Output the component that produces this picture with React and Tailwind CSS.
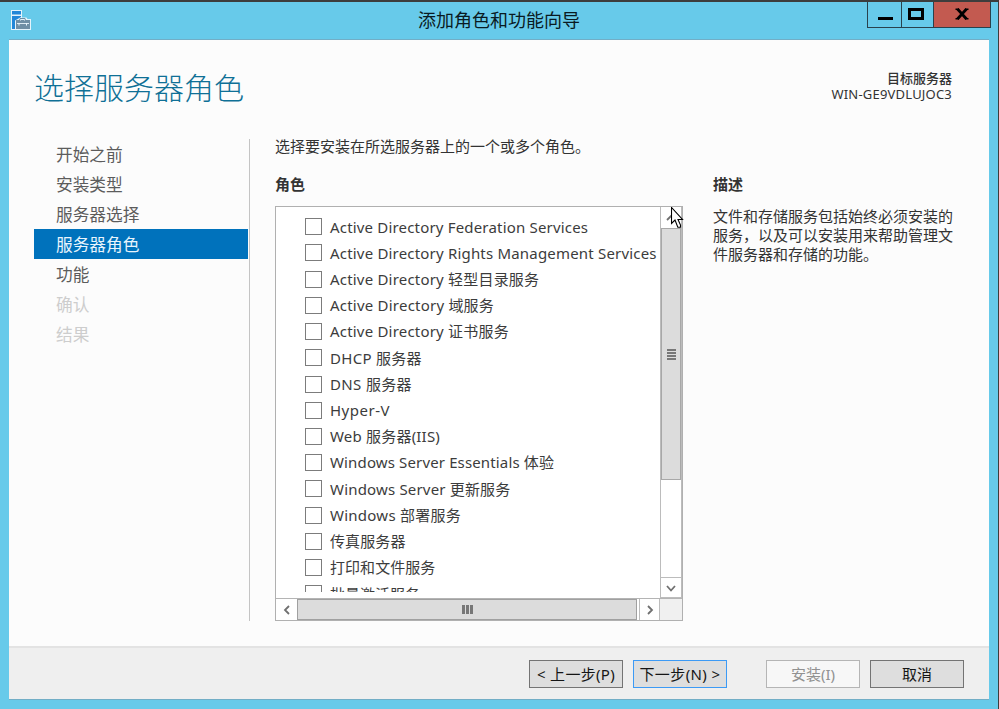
import React from 'react';

const ROLES = [
  ['Active Directory Federation Services', 'tracking-[0.18px]'],
  ['Active Directory Rights Management Services', 'tracking-[0.19px]'],
  ['Active Directory 轻型目录服务', 'tracking-[0.2px]'],
  ['Active Directory 域服务', 'tracking-[0.22px]'],
  ['Active Directory 证书服务', 'tracking-[0.2px]'],
  ['DHCP 服务器', 'tracking-[0.3px]'],
  ['DNS 服务器', 'tracking-[0.35px]'],
  ['Hyper-V', 'tracking-[0.5px]'],
  ['Web 服务器(IIS)', 'tracking-[0.2px]'],
  ['Windows Server Essentials 体验', 'tracking-[0.14px]'],
  ['Windows Server 更新服务', 'tracking-[0.18px]'],
  ['Windows 部署服务', 'tracking-[0.25px]'],
  ['传真服务器', 'tracking-[0.1px]'],
  ['打印和文件服务', 'tracking-[0.05px]'],
  ['批量激活服务', 'tracking-[0.01px]'],
];

const STEPS = [
  ['开始之前', 'text-[#5c5c5c]'],
  ['安装类型', 'text-[#5c5c5c]'],
  ['服务器选择', 'text-[#5c5c5c]'],
  ['服务器角色', 'bg-[#0072bc] text-[#e8f4fc]'],
  ['功能', 'text-[#5c5c5c]'],
  ['确认', 'text-[#cdcdcd]'],
  ['结果', 'text-[#cdcdcd]'],
];

function Chevron({ d }) {
  return (
    <svg width="10" height="10" viewBox="0 0 10 10" fill="none" stroke="#707070" strokeWidth="1.8">
      <path d={d} />
    </svg>
  );
}

function TitleBar() {
  return (
    <header className="relative flex h-[37px] shrink-0 justify-between">
      <svg className="ml-[11px] mt-[8px]" width="20" height="20" viewBox="0 0 20 20">
        <path d="M0 0H11V7.500H15.500L16.500 9H20V20H0Z" fill="#e4f3fb" />
        <path d="M1 1H10V4.500H1ZM1 6H10V7L7.500 8.500L4 10.500V19H1Z" fill="#2287d8" />
        <path d="M5 10H8L9 8H14L15 10H19V19H5Z" fill="#6f8fa5" />
        <path d="M9.500 10.500V9.500H13.500V10.500" fill="none" stroke="#e4f3fb" />
        <path d="M6 13.500H18" fill="none" stroke="#dceaf2" />
        <path d="M8 13V15.500M15.500 13V15.500" fill="none" stroke="#e4f3fb" />
      </svg>
      <h1 className="absolute left-[418px] top-[6px] whitespace-nowrap text-[18px] leading-[24px] text-[#0a1a22]">添加角色和功能向导</h1>
      <div className="mr-[7px] flex h-[26px] border-x border-b border-[#29424d]">
        <div className="flex w-[34px] justify-center border-r border-[#29424d] pl-px pt-[15px]">
          <span className="h-[3px] w-[15px] bg-black" />
        </div>
        <div className="flex w-[32px] justify-center border-r border-[#29424d] pr-[3px] pt-[6px]">
          <span className="h-[12px] w-[16px] border-[3px] border-black" />
        </div>
        <div className="flex w-[56px] justify-center bg-[#c35a50] pr-[1px] pt-[6px]">
          <svg width="14" height="12" viewBox="0 0 14 12" fill="none" stroke="#000" strokeWidth="2.800">
            <path d="M0.500 1.200H4M10 1.200H13.500M0.500 10.800H4M10 10.800H13.500" strokeWidth="1.600" />
            <path d="M2.500 1L11.500 11M11.500 1L2.500 11" />
          </svg>
        </div>
      </div>
    </header>
  );
}

function RoleList() {
  return (
    <div className="relative flex h-[415px] w-[408px] flex-col border border-[#b0b0b0] bg-white">
      <div className="flex h-[391px]">
        <div className="h-[385px] w-[384px] overflow-hidden pl-[29px] pt-[6.6px]">
          {ROLES.map(([name, tracking]) => (
            <div key={name} className="flex h-[26.23px] items-center">
              <span className="mr-[8px] h-[17px] w-[17px] shrink-0 border border-[#7c7c7c] bg-white" />
              <span className={'whitespace-nowrap pb-[0.4px] text-[15px] leading-[24px] text-[#3c3c3c] ' + tracking}>{name}</span>
            </div>
          ))}
        </div>
        <div className="flex w-[22px] flex-col border-l border-r border-[#bcbcbc]">
          <div className="flex h-[21px] items-center justify-center"><Chevron d="M1 7L5 3L9 7" /></div>
          <div className="flex h-[252px] flex-col items-center justify-center gap-px border border-[#a8a8a8] bg-[#dcdcdc] pt-[1px]">
            {[0, 1, 2, 3].map((i) => <span key={i} className="h-[2px] w-[9px] bg-[#777]" />)}
          </div>
          <div className="flex-1" />
          <div className="flex h-[21px] items-center justify-center border-y border-[#bcbcbc]"><Chevron d="M1 3L5 7.500L9 3" /></div>
        </div>
      </div>
      <div className="flex flex-1 border-t border-[#b4b4b4]">
        <div className="flex w-[21px] items-center justify-center"><Chevron d="M7 1L3 5L7 9" /></div>
        <div className="flex w-[340px] items-center justify-center gap-px border border-[#a0a0a0] bg-[#dcdcdc]">
          {[0, 1, 2].map((i) => <span key={i} className="h-[9px] w-[3px] bg-[#777]" />)}
        </div>
        <div className="ml-[2px] flex w-[21px] items-center justify-center border-x border-[#bcbcbc]"><Chevron d="M3 1L7 5L3 9" /></div>
        <div className="flex-1 bg-[#f0f0f0]" />
      </div>
      <svg className="absolute left-[395px] top-0" width="14" height="22" viewBox="0 0 14 22">
        <path d="M0.500 0.500V16.500L4 13L6.800 20.200H9.500V18L7 12.500H11.500Z" fill="#fff" stroke="#000" strokeWidth="1.100" />
      </svg>
    </div>
  );
}

function Footer() {
  const base = 'flex h-[28px] w-[94px] items-center justify-center whitespace-pre border text-[15px] leading-[20px] ';
  return (
    <footer className="flex h-[53px] shrink-0 justify-end border-t-2 border-[#e3e3e3] bg-[#efefef] pr-[25px] pt-[12px]">
      <button className={base + 'border-[#747474] bg-[#dedede] tracking-[0.3px] text-[#151515]'}>{'< 上一步(P)'}</button>
      <button className={base + 'ml-[10px] border-[#3c9af5] bg-[#dedede] tracking-[0.4px] text-[#151515]'}>{'下一步(N) >'}</button>
      <button className={base + 'ml-[39px] border-[#b5b5b5] bg-[#f7f7f7] text-[#919191]'}>安装(I)</button>
      <button className={base + 'ml-[10px] border-[#747474] bg-[#dedede] text-[#151515]'}>取消</button>
    </footer>
  );
}

export default function App() {
  return (
    <div className="flex h-[709px] w-[999px] flex-col overflow-hidden border-r border-t-2 border-[#3d3d3d] bg-[#67caea] font-['Noto_Sans','Noto_Sans_CJK_SC',sans-serif]">
      <TitleBar />
      <div className="ml-[9px] flex h-[661px] w-[980px] flex-col border-y border-[#72aec6] bg-[#fcfcfc]">
        <div className="flex h-[99px] justify-between pl-[25px] pr-[37px]">
          <h2 className="pt-[24px] text-[30px] font-light leading-[48px] text-[#0f7096]">选择服务器角色</h2>
          <div className="pt-[29px] text-right text-[13px] leading-[18px] text-[#333]">
            <p className="h-[16px] font-medium">目标服务器</p>
            <p className="tracking-[0.2px]">WIN-GE9VDLUJOC3</p>
          </div>
        </div>
        <main className="flex flex-1 pl-[25px]">
          <nav className="flex h-[482px] w-[216px] flex-col border-r border-[#c4c4c4] pr-px">
            {STEPS.map(([name, look]) => (
              <div key={name} className={'h-[30px] shrink-0 pl-[22px] text-[16.7px] leading-[31px] ' + look}>{name}</div>
            ))}
          </nav>
          <section className="ml-[25px] flex w-[408px] flex-col text-[#333]">
            <p className="h-[35px] text-[15px] leading-[15px]">选择要安装在所选服务器上的一个或多个角色。</p>
            <h3 className="h-[32px] text-[15px] font-bold leading-[20px]">角色</h3>
            <RoleList />
          </section>
          <section className="ml-[30px] w-[246px] text-[#333]">
            <h3 className="mt-[35px] text-[15px] font-bold leading-[20px]">描述</h3>
            <p className="mt-[13px] whitespace-nowrap text-[15px] leading-[19px]">
              文件和存储服务包括始终必须安装的<br />服务，以及可以安装用来帮助管理文<br />件服务器和存储的功能。
            </p>
          </section>
        </main>
        <Footer />
      </div>
    </div>
  );
}
